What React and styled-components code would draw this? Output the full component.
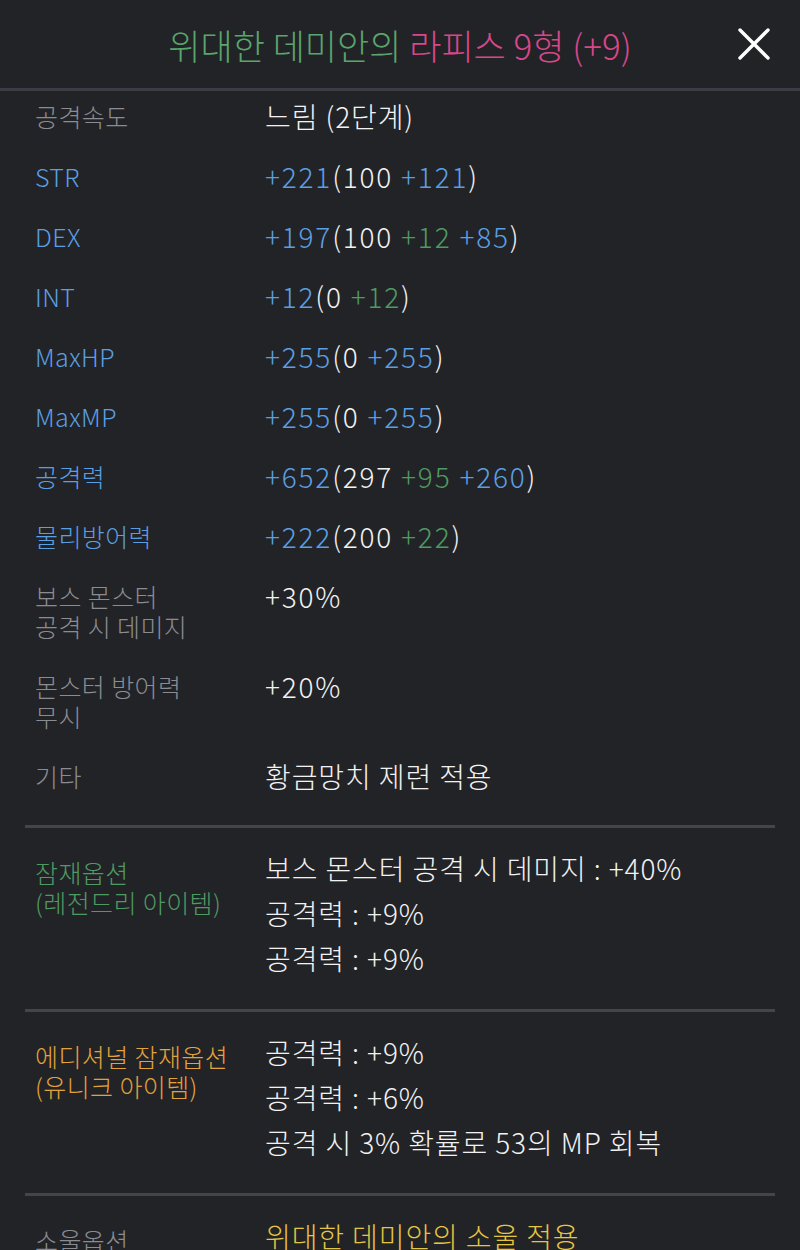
import React from "react";
import styled, { createGlobalStyle } from "styled-components";

const GlobalStyle = createGlobalStyle`
  html, body {
    margin: 0;
    padding: 0;
    background: #222327;
  }
  body {
    font-family: "Noto Sans CJK KR", "Noto Sans", sans-serif;
    color: #f2f2f2;
    -webkit-font-smoothing: antialiased;
  }
`;

const colors = {
  blue: "#5b9fe3",
  green: "#4f9a62",
  white: "#f2f2f2",
  gray: "#8b8c92",
  pink: "#d8478a",
  titleGreen: "#5aa56c",
  orange: "#e3a23a",
  yellow: "#e6c640",
};

const Page = styled.div`
  width: 800px;
  min-height: 1250px;
  background: #222327;
  overflow: hidden;
`;

const Header = styled.header`
  display: grid;
  grid-template-columns: 1fr auto 1fr;
  align-items: center;
  height: 88px;
  border-bottom: 3px solid #3c3d44;
`;

const Title = styled.h1`
  grid-column: 2;
  margin: 0;
  font-size: 35px;
  font-weight: 300;
  color: ${colors.titleGreen};
`;

const CloseButton = styled.button`
  grid-column: 3;
  justify-self: end;
  margin-right: 28px;
  width: 36px;
  height: 36px;
  padding: 0;
  border: none;
  background: none;
  display: flex;
  align-items: center;
  justify-content: center;
`;

const Section = styled.section`
  margin: 0 25px;
  padding: ${(p) => p.$pad || "0"};
  border-top: ${(p) => (p.$divider ? "3px solid #44454b" : "none")};
`;

const Row = styled.div`
  display: grid;
  grid-template-columns: 230px 1fr;
  padding: ${(p) => p.$pad || "10px 10px 20px"};
  line-height: 30px;
`;

const Label = styled.div`
  font-size: 25px;
  font-weight: 300;
  letter-spacing: 0.4px;
  color: ${(p) => p.$color || colors.gray};
  padding-top: ${(p) => p.$offset || "0"};
  white-space: pre-line;
`;

const Value = styled.div`
  font-size: 28px;
  font-weight: 300;
  letter-spacing: ${(p) => (p.$digits ? "1.8px" : "0.9px")};
  color: ${(p) => p.$color || colors.white};
  line-height: ${(p) => p.$lh || "30px"};
`;

const Tone = styled.span`
  color: ${(p) => colors[p.$c] || "inherit"};
`;

const CloseIcon = () => (
  <svg width="34" height="34" viewBox="0 0 34 34">
    <path
      d="M3 3 L31 31 M31 3 L3 31"
      stroke="#ffffff"
      strokeWidth="3.4"
      strokeLinecap="round"
    />
  </svg>
);

const statRows = [
  { label: "STR", parts: [["+221", "blue"], ["(100 "], ["+121", "blue"], [")"]] },
  {
    label: "DEX",
    parts: [["+197", "blue"], ["(100 "], ["+12", "green"], [" "], ["+85", "blue"], [")"]],
  },
  { label: "INT", parts: [["+12", "blue"], ["(0 "], ["+12", "green"], [")"]] },
  { label: "MaxHP", parts: [["+255", "blue"], ["(0 "], ["+255", "blue"], [")"]] },
  { label: "MaxMP", parts: [["+255", "blue"], ["(0 "], ["+255", "blue"], [")"]] },
  {
    label: "공격력",
    parts: [["+652", "blue"], ["(297 "], ["+95", "green"], [" "], ["+260", "blue"], [")"]],
  },
  { label: "물리방어력", parts: [["+222", "blue"], ["(200 "], ["+22", "green"], [")"]] },
];

const optionSections = [
  {
    label: "잠재옵션\n(레전드리 아이템)",
    color: colors.green,
    lines: ["보스 몬스터 공격 시 데미지 : +40%", "공격력 : +9%", "공격력 : +9%"],
  },
  {
    label: "에디셔널 잠재옵션\n(유니크 아이템)",
    color: colors.orange,
    lines: ["공격력 : +9%", "공격력 : +6%", "공격 시 3% 확률로 53의 MP 회복"],
  },
  {
    label: "소울옵션",
    color: colors.gray,
    lines: ["위대한 데미안의 소울 적용"],
    valueColor: colors.yellow,
  },
];

export default function App() {
  return (
    <Page>
      <GlobalStyle />
      <Header>
        <Title>
          위대한 데미안의 <Tone $c="pink">라피스 9형 (+9)</Tone>
        </Title>
        <CloseButton aria-label="닫기">
          <CloseIcon />
        </CloseButton>
      </Header>

      <Section $pad="0 0 14px">
        <Row>
          <Label>공격속도</Label>
          <Value>느림 (2단계)</Value>
        </Row>
        {statRows.map((row) => (
          <Row key={row.label}>
            <Label $color={colors.blue}>{row.label}</Label>
            <Value $digits>
              {row.parts.map(([text, c], i) => (
                <Tone key={i} $c={c}>
                  {text}
                </Tone>
              ))}
            </Value>
          </Row>
        ))}
        <Row>
          <Label>{"보스 몬스터\n공격 시 데미지"}</Label>
          <Value $digits>+30%</Value>
        </Row>
        <Row>
          <Label>{"몬스터 방어력\n무시"}</Label>
          <Value $digits>+20%</Value>
        </Row>
        <Row>
          <Label>기타</Label>
          <Value>황금망치 제련 적용</Value>
        </Row>
      </Section>

      {optionSections.map((sec) => (
        <Section key={sec.label} $divider $pad="3px 0 13px">
          <Row $pad="15px 10px">
            <Label $color={sec.color} $offset="11px">
              {sec.label}
            </Label>
            <Value $color={sec.valueColor} $lh="45px">
              {sec.lines.map((line, i) => (
                <div key={i}>{line}</div>
              ))}
            </Value>
          </Row>
        </Section>
      ))}
    </Page>
  );
}
